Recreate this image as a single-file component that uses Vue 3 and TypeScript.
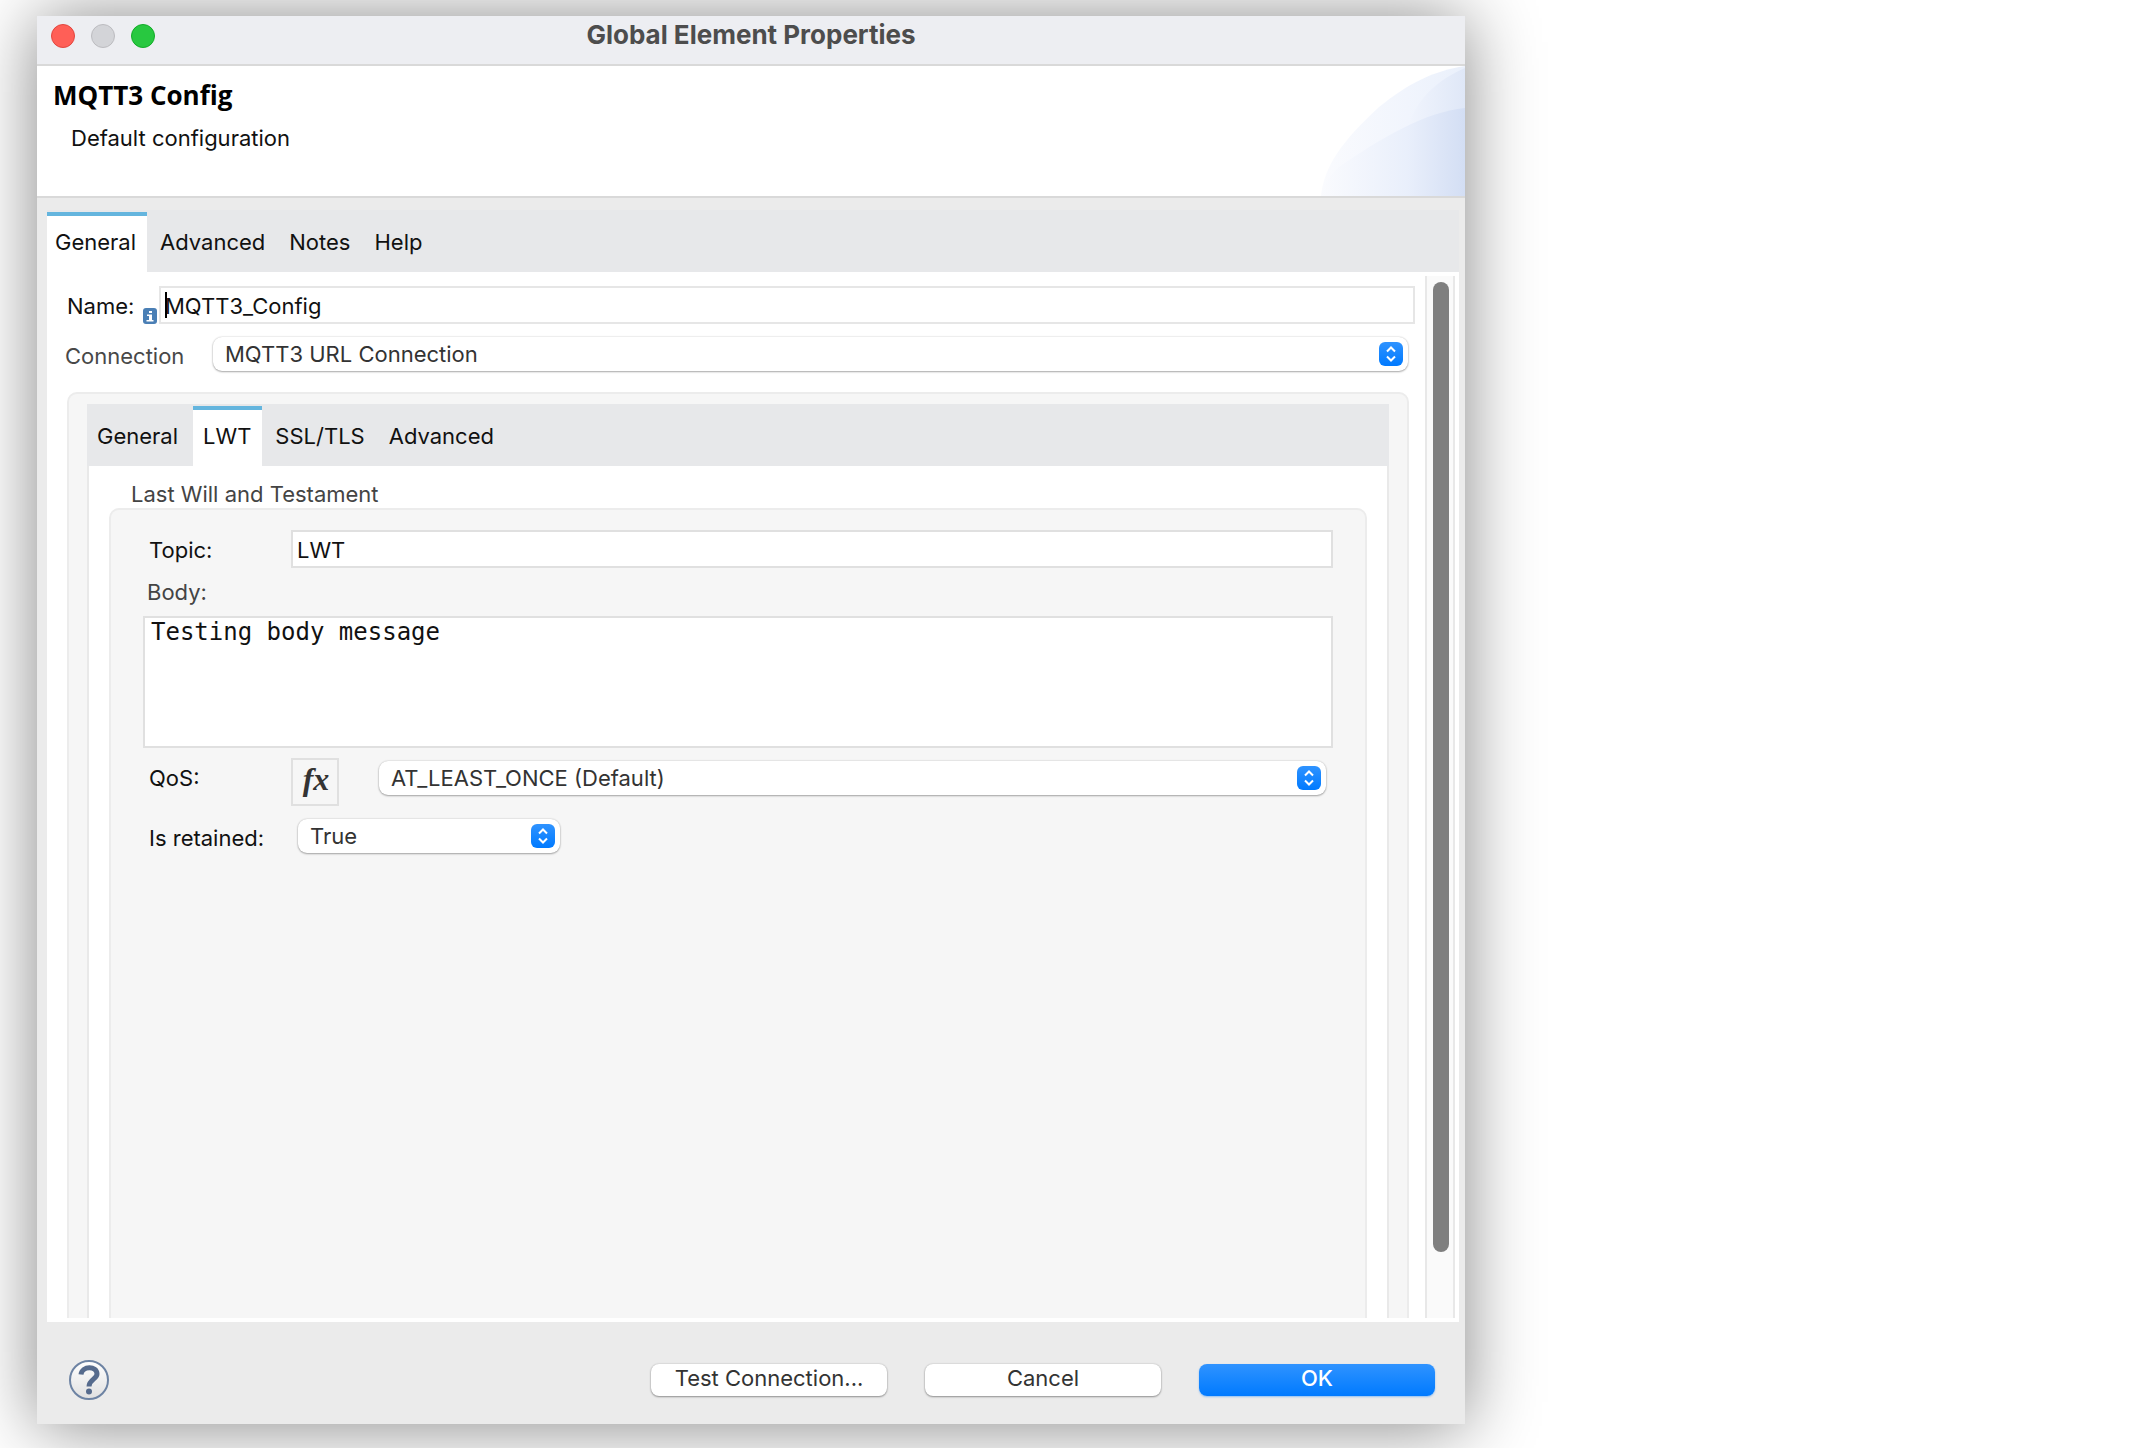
<script setup lang="ts">
import { ref } from 'vue'

const outerTabs: string[] = ['General', 'Advanced', 'Notes', 'Help']
const innerTabs: string[] = ['General', 'LWT', 'SSL/TLS', 'Advanced']
const outerActive = ref('General')
const innerActive = ref('LWT')

const name = ref('MQTT3_Config')
const connection = ref('MQTT3 URL Connection')
const topic = ref('LWT')
const body = ref('Testing body message')
const qos = ref('AT_LEAST_ONCE (Default)')
const retained = ref('True')
</script>

<template>
  <div class="page">
    <section class="window" role="dialog" aria-labelledby="window-title">
      <header class="titlebar">
        <div class="lights">
          <button class="light red" type="button" aria-label="Close"></button>
          <button class="light grey" type="button" aria-label="Minimize" disabled></button>
          <button class="light green" type="button" aria-label="Zoom"></button>
        </div>
        <h1 id="window-title">Global Element Properties</h1>
        <div class="lights"></div>
      </header>

      <div class="banner">
        <div class="banner-text">
          <h2>MQTT3 Config</h2>
          <p>Default configuration</p>
        </div>
        <svg class="swoosh" viewBox="0 0 144 130" width="144" height="130" aria-hidden="true">
          <defs>
            <linearGradient id="sw-a" x1="0" x2="1" y1="0" y2="0">
              <stop offset="0" stop-color="#fafbfe" />
              <stop offset="0.6" stop-color="#f1f5fd" />
              <stop offset="1" stop-color="#eaf0fb" />
            </linearGradient>
            <linearGradient id="sw-b" x1="0" x2="1" y1="0" y2="0">
              <stop offset="0" stop-color="#f1f5fd" />
              <stop offset="1" stop-color="#dfe7f7" />
            </linearGradient>
            <linearGradient id="sw-c" gradientUnits="userSpaceOnUse" x1="0" x2="144" y1="0" y2="0">
              <stop offset="0" stop-color="#fafbfe" />
              <stop offset="0.6" stop-color="#e9effb" />
              <stop offset="1" stop-color="#d3def4" />
            </linearGradient>
          </defs>
          <path d="M0 130C3 101 20 76 58 41C88 17 112 5 144 0V130Z" fill="url(#sw-a)" />
          <path d="M86 66C92 40 108 18 144 2V130H86Z" fill="url(#sw-b)" />
          <path d="M0 130C4 116 10 108 18 101C60 72 104 46 144 42V130Z" fill="url(#sw-c)" />
        </svg>
      </div>

      <div class="main">
        <nav class="tabs" role="tablist">
          <button
            v-for="tab in outerTabs"
            :key="tab"
            type="button"
            role="tab"
            class="tab"
            :class="{ active: tab === outerActive }"
            :aria-selected="tab === outerActive"
            @click="outerActive = tab"
          >{{ tab }}</button>
        </nav>

        <div class="sheet">
          <form class="form" @submit.prevent>
            <div class="name-row">
              <label for="name">Name:</label>
              <svg class="info" viewBox="0 0 14 16" width="14" height="16" aria-hidden="true">
                <rect width="14" height="16" rx="3" fill="#4a7fb5" />
                <path d="M6 3h3v2H6zM4 6.500h5V12h1.500v1.500h-7V12H6V8H4z" fill="#fff" />
              </svg>
              <div class="field">
                <input id="name" v-model="name" type="text" />
                <span class="caret"></span>
              </div>
            </div>

            <div class="connection-row">
              <label for="connection">Connection</label>
              <div class="picker">
                <select id="connection" v-model="connection">
                  <option>MQTT3 URL Connection</option>
                </select>
                <svg class="arrows" viewBox="0 0 24 24" width="24" height="24" aria-hidden="true">
                  <path d="M8 9.500L12 5.500L16 9.500M8 14.500L12 18.500L16 14.500" />
                </svg>
              </div>
            </div>

            <div class="group">
              <nav class="tabs inner" role="tablist">
                <button
                  v-for="tab in innerTabs"
                  :key="tab"
                  type="button"
                  role="tab"
                  class="tab"
                  :class="{ active: tab === innerActive }"
                  :aria-selected="tab === innerActive"
                  @click="innerActive = tab"
                >{{ tab }}</button>
              </nav>

              <div class="inner-sheet">
                <h3>Last Will and Testament</h3>
                <div class="lwt">
                  <div class="row">
                    <label for="topic">Topic:</label>
                    <input id="topic" v-model="topic" type="text" />
                  </div>
                  <label class="body-label" for="body">Body:</label>
                  <textarea id="body" v-model="body" spellcheck="false"></textarea>
                  <div class="row qos">
                    <label for="qos">QoS:</label>
                    <button class="fx" type="button">fx</button>
                    <div class="picker">
                      <select id="qos" v-model="qos">
                        <option>AT_LEAST_ONCE (Default)</option>
                      </select>
                      <svg class="arrows" viewBox="0 0 24 24" width="24" height="24" aria-hidden="true">
                        <path d="M8 9.500L12 5.500L16 9.500M8 14.500L12 18.500L16 14.500" />
                      </svg>
                    </div>
                  </div>
                  <div class="row retained">
                    <label for="retained">Is retained:</label>
                    <div class="picker">
                      <select id="retained" v-model="retained">
                        <option>True</option>
                        <option>False</option>
                      </select>
                      <svg class="arrows" viewBox="0 0 24 24" width="24" height="24" aria-hidden="true">
                        <path d="M8 9.500L12 5.500L16 9.500M8 14.500L12 18.500L16 14.500" />
                      </svg>
                    </div>
                  </div>
                </div>
              </div>
            </div>
          </form>
          <div class="track"><div class="thumb"></div></div>
        </div>
      </div>

      <footer class="footer">
        <button class="help" type="button" aria-label="Help">
          <svg viewBox="0 0 40 40" width="40" height="40" aria-hidden="true">
            <defs>
              <linearGradient id="help-fill" x1="0" x2="0" y1="0" y2="1">
                <stop offset="0" stop-color="#fff" />
                <stop offset="1" stop-color="#e0e0e0" />
              </linearGradient>
            </defs>
            <circle cx="20" cy="20" r="19" fill="url(#help-fill)" stroke="#6d83a3" stroke-width="2" />
            <path d="M12 14.500C13 5.500 28 5.500 28 14C28 19 20 19.500 20 26.500" fill="none" stroke="#566b8d" stroke-width="5" />
            <circle cx="20" cy="31.500" r="3" fill="#566b8d" />
          </svg>
        </button>
        <div class="actions">
          <button class="push" type="button">Test Connection...</button>
          <button class="push" type="button">Cancel</button>
          <button class="push primary" type="button">OK</button>
        </div>
      </footer>
    </section>
  </div>
</template>

<style>
body {
  background: #fff;
}
</style>

<style scoped>
* {
  box-sizing: border-box;
}

.page {
  display: flex;
  min-height: 100vh;
  padding: 16px 0 24px 37px;
  overflow: hidden;
  font-family: Inter, "Liberation Sans", sans-serif;
  font-size: 22px;
  line-height: 28px;
  color: #111;
}

.window {
  display: flex;
  flex-direction: column;
  width: calc(100vw * 2 / 3);
  background: #ebebeb;
  box-shadow: 0 2px 68px rgba(0, 0, 0, 0.48);
}

h1,
h2,
h3,
p {
  margin: 0;
}

button,
input,
select,
textarea {
  margin: 0;
  font: inherit;
  color: inherit;
  border-radius: 0;
  outline: none;
}

.titlebar {
  display: flex;
  align-items: flex-start;
  justify-content: space-between;
  height: 50px;
  padding: 5px 14px;
  background: #edeef2;
  border-bottom: 2px solid #d9d9d9;
}

.titlebar h1 {
  font-size: 26px;
  font-weight: 700;
  line-height: 28px;
  color: #4d4d4d;
}

.lights {
  display: flex;
  gap: 16px;
  width: 104px;
  padding-top: 3px;
}

.light {
  width: 24px;
  height: 24px;
  padding: 0;
  border: 1px solid;
  border-radius: 50%;
}

.red {
  background: #ff5f57;
  border-color: #e2463f;
}

.grey {
  background: #d3d4d8;
  border-color: #bcbcc0;
}

.green {
  background: #28c840;
  border-color: #12ac28;
}

.banner {
  display: flex;
  justify-content: space-between;
  background: #fff;
  border-bottom: 2px solid #d9d9d9;
}

.banner-text {
  padding: 13px 0 0 16px;
}

.banner h2 {
  font-family: "Open Sans", "Noto Sans", sans-serif;
  font-size: 26px;
  font-weight: 700;
  line-height: 32px;
  color: #000;
}

.banner p {
  padding: 13px 0 0 18px;
}

.swoosh {
  display: block;
}

.main {
  display: flex;
  flex: 1;
  flex-direction: column;
  padding: 12px 6px 0 10px;
}

.tabs {
  display: flex;
  height: 62px;
  padding-top: 2px;
  background: #e7e8ea;
}

.tab {
  padding: 0 11px 4px 13px;
  background: none;
  border: 0;
  border-top: 4px solid transparent;
}

.tab.active {
  padding: 0 11px 4px 10px;
  background: #fff;
  border-top-color: #64b5de;
}

.tab:first-child {
  padding-left: 8px;
}

.inner .tab:first-child {
  padding-right: 15px;
}

.sheet {
  display: flex;
  flex: 1;
  padding: 4px 4px 4px 0;
  background: #fff;
}

.form {
  display: flex;
  flex: 1;
  flex-direction: column;
  padding: 10px 16px 0 20px;
}

.name-row {
  display: flex;
  align-items: flex-end;
  margin-right: -6px;
}

.name-row label {
  width: 76px;
  height: 38px;
  line-height: 40px;
}

.info {
  margin-right: 2px;
}

.field {
  position: relative;
  flex: 1;
}

input {
  display: block;
  width: 100%;
  height: 38px;
  padding: 2px 4px 0;
  background: #fff;
  border: 2px solid #e6e6e6;
}

.caret {
  position: absolute;
  top: 6px;
  left: 6px;
  width: 2px;
  height: 26px;
  background: #000;
}

.connection-row {
  display: flex;
  margin: 13px 1px 0 -2px;
  color: #484848;
}

.connection-row label {
  width: 148px;
  height: 34px;
  line-height: 38px;
}

.connection-row label,
.name-row label {
  flex: none;
}

.picker {
  position: relative;
  flex: 1;
}

.picker select {
  display: block;
  width: 100%;
  height: 34px;
  padding: 0 40px 0 12px;
  line-height: 28px;
  color: #333;
  appearance: none;
  background: #fff;
  border: 0;
  border-radius: 9px;
  box-shadow: 0 0 2px rgba(0, 0, 0, 0.2), 0 1px 2px rgba(0, 0, 0, 0.3);
}

.arrows {
  position: absolute;
  top: 5px;
  right: 5px;
  background: linear-gradient(#2f93ff, #007aff);
  border-radius: 6px;
  pointer-events: none;
}

.arrows path {
  fill: none;
  stroke: #fff;
  stroke-width: 2;
}

.group {
  display: flex;
  flex: 1;
  flex-direction: column;
  margin-top: 21px;
  padding: 10px 18px 0;
  background: #f6f6f6;
  border: 2px solid #ececec;
  border-bottom: 0;
  border-radius: 10px 10px 0 0;
}

.tabs.inner {
  padding-left: 2px;
}

.inner-sheet {
  display: flex;
  flex: 1;
  flex-direction: column;
  padding: 14px 20px 0;
  background: #fff;
  border: solid #e9e9e9;
  border-width: 0 2px;
}

h3 {
  padding-left: 22px;
  font-size: 22px;
  font-weight: 400;
  line-height: 28px;
  color: #444;
}

.lwt {
  display: flex;
  flex: 1;
  flex-direction: column;
  padding: 20px 32px 0;
  background: #f6f6f6;
  border: 2px solid #ececec;
  border-bottom: 0;
  border-radius: 10px 10px 0 0;
}

.lwt input,
.lwt textarea,
.fx {
  border: 2px solid #e0e0e0;
}

.row {
  display: flex;
  align-items: center;
}

.row label {
  flex: none;
  width: 148px;
  padding: 2px 0 0 6px;
}

.body-label {
  padding: 10px 0 0 4px;
  line-height: 28px;
  color: #444;
}

textarea {
  display: block;
  height: 132px;
  margin-top: 10px;
  padding: 0 6px;
  font-family: "DejaVu Sans Mono", monospace;
  font-size: 24px;
  line-height: 28px;
  resize: none;
  background: #fff;
}

.qos {
  align-items: flex-start;
  margin-top: 10px;
}

.qos label {
  padding-top: 6px;
}

.qos .picker {
  margin: 3px 7px 0 40px;
}

.fx {
  width: 48px;
  height: 48px;
  padding: 0 0 6px 2px;
  font-family: "Liberation Serif", serif;
  font-size: 32px;
  font-style: italic;
  font-weight: 700;
  color: #333;
  background: #f6f6f6;
}

.retained {
  margin-top: 13px;
}

.retained label {
  padding-top: 4px;
}

.retained .picker {
  flex: none;
  width: 262px;
  margin-left: 7px;
}

.track {
  width: 30px;
  padding: 6px;
  background: #fafafa;
  border: solid #e8e8e8;
  border-width: 0 2px;
}

.thumb {
  width: 16px;
  height: calc(100% - 60px);
  background: #7f7f7f;
  border-radius: 8px;
}

.footer {
  display: flex;
  align-items: flex-start;
  justify-content: space-between;
  height: 102px;
  padding: 38px 30px 0 32px;
}

.help {
  padding: 0;
  background: none;
  border: 0;
}

.help svg {
  display: block;
}

.actions {
  display: flex;
  gap: 38px;
  padding-top: 4px;
}

.push {
  width: 236px;
  height: 32px;
  padding: 0 0 4px;
  line-height: 28px;
  color: #333;
  background: #fff;
  border: 0;
  border-radius: 8px;
  box-shadow: 0 0 2px rgba(0, 0, 0, 0.2), 0 1px 2px rgba(0, 0, 0, 0.35);
}

.primary {
  font-weight: 500;
  color: #fff;
  background: linear-gradient(#2f93ff, #007aff);
  box-shadow: 0 1px 2px rgba(0, 122, 255, 0.4);
}
</style>
